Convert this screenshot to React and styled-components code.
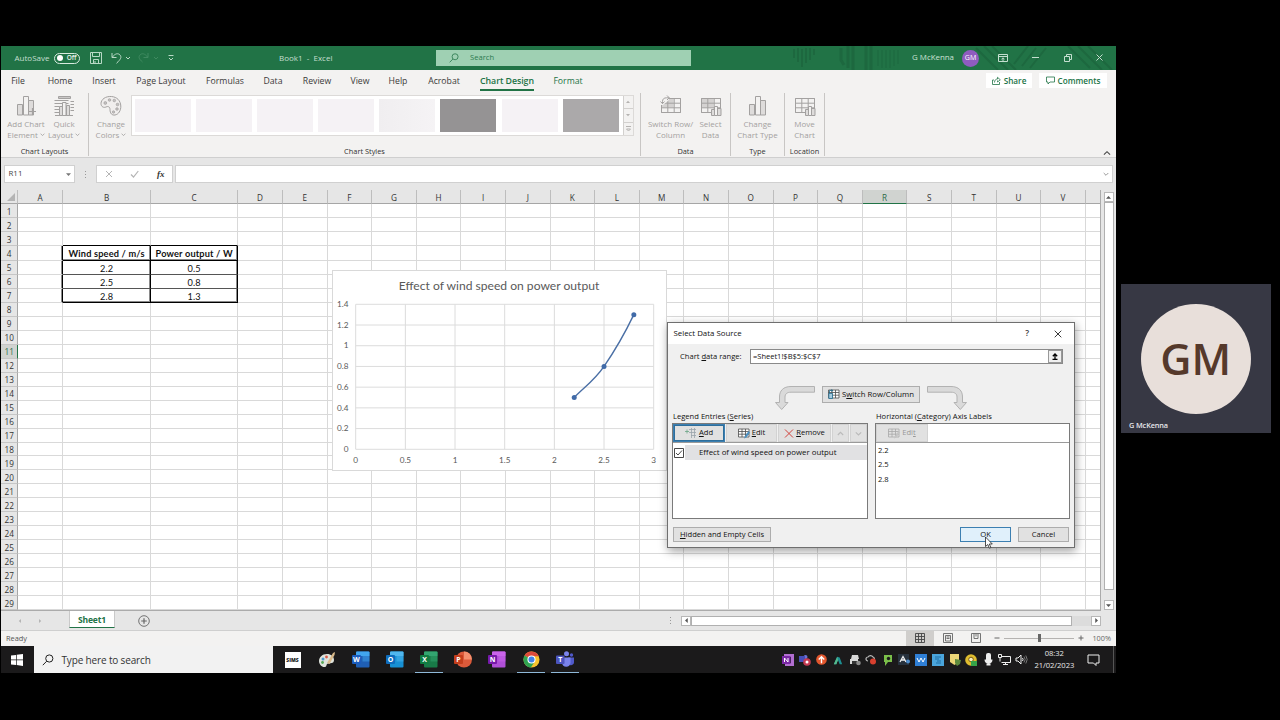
import React from "react";
import styled, { createGlobalStyle } from "styled-components";

const GlobalStyle = createGlobalStyle`
  * {
    box-sizing: border-box;
  }
  body {
    margin: 0;
    background: #000;
    overflow: hidden;
    font-family: "Open Sans", "Noto Sans", sans-serif;
  }
  svg {
    display: block;
    flex: none;
  }
`;

const Page = styled.div`
  display: flex;
  width: 1280px;
  height: 720px;
  background: #000;
`;

const Desktop = styled.div`
  position: relative;
  display: flex;
  flex-direction: column;
  width: 1115px;
  height: 627px;
  margin: 46px 0 0 1px;
  background: #e6e6e6;
  white-space: nowrap;
`;

const Text = styled.span`
  display: block;
  font-size: ${(p) => p.$size || 8}px;
  font-weight: ${(p) => p.$weight || 400};
  color: ${(p) => p.$color || "#333"};
  letter-spacing: ${(p) => p.$ls || 0}px;
  line-height: 1.2;
`;

/* ---------- title bar ---------- */

const TitleBar = styled.div`
  position: relative;
  display: flex;
  align-items: center;
  height: 24px;
  flex: none;
  background: #217346;
`;

const TitlePattern = styled.svg`
  position: absolute;
  top: 0;
  right: 0;
`;

const TitleLeft = styled.div`
  display: flex;
  align-items: center;
  width: 278px;
  padding-left: 13.5px;
`;

const Toggle = styled.div`
  display: flex;
  align-items: center;
  width: 26px;
  height: 11px;
  margin: 0 9.5px 0 5px;
  padding: 0 3px 0 2px;
  border: 1px solid #d8eadf;
  border-radius: 6px;
  justify-content: space-between;
`;

const Knob = styled.div`
  width: 6px;
  height: 6px;
  border-radius: 50%;
  background: #fff;
`;

const BookName = styled.div`
  width: 157px;
`;

const SearchBox = styled.div`
  display: flex;
  align-items: center;
  gap: 11px;
  width: 255px;
  height: 16px;
  padding-left: 13px;
  background: #9fd0b3;
`;

const TitleRight = styled.div`
  position: relative;
  display: flex;
  flex: 1;
  align-items: center;
  padding-left: 221px;
`;

const Avatar = styled.div`
  display: flex;
  align-items: center;
  justify-content: center;
  width: 17px;
  height: 17px;
  margin: 0 19px 0 8px;
  border-radius: 50%;
  background: #8f5cbf;
`;

/* ---------- ribbon ---------- */

const TabRow = styled.div`
  display: flex;
  flex: none;
  height: 22px;
  padding-left: 2px;
  background: #f3f2f1;
`;

const Tab = styled.div`
  display: flex;
  align-items: center;
  justify-content: center;
  width: ${(p) => p.$w}px;
  height: 22px;
`;

const ActiveLabel = styled.div`
  display: flex;
  align-items: center;
  height: 17px;
  margin-top: 2px;
  border-bottom: 2px solid #217346;
`;

const TabActions = styled.div`
  display: flex;
  gap: 7px;
  margin-left: auto;
  padding: 3px 9px 0 0;
`;

const ActionButton = styled.div`
  display: flex;
  align-items: center;
  justify-content: center;
  gap: 3px;
  width: ${(p) => p.$w}px;
  height: 15px;
  background: #fff;
`;

const Ribbon = styled.div`
  display: flex;
  flex: none;
  height: 66px;
  background: #f3f2f1;
  border-bottom: 1px solid #cfcfcf;
`;

const Group = styled.div`
  display: flex;
  flex-direction: column;
  justify-content: space-between;
  align-items: center;
  width: ${(p) => p.$w}px;
  height: 63px;
  margin-top: 1px;
  padding: 2px 0 0;
  border-right: 1px solid #c8c6c4;
`;

const GroupBody = styled.div`
  display: flex;
  align-items: flex-start;
  width: 100%;
  padding-left: ${(p) => p.$pad || 0}px;
`;

const BigButton = styled.div`
  display: flex;
  flex-direction: column;
  align-items: center;
  width: ${(p) => p.$w}px;
  svg {
    margin-bottom: 1px;
  }
`;

const ButtonLine = styled.div`
  display: flex;
  align-items: center;
  justify-content: center;
  gap: 2px;
  height: 11px;
`;

const Gallery = styled.div`
  display: flex;
  height: 41px;
  margin-left: 1.5px;
  background: #fff;
  border: 1px solid #dcdad8;
`;

const Swatches = styled.div`
  display: flex;
  gap: 5.2px;
  width: 491px;
  padding: 3px 0 0 3px;
`;

const Swatch = styled.div`
  width: 56px;
  height: 33px;
  background: ${(p) => p.$bg};
`;

const GalleryScroll = styled.div`
  display: flex;
  flex-direction: column;
  width: 10px;
  border-left: 1px solid #d2d0ce;
`;

const ScrollStep = styled.div`
  display: flex;
  flex: 1;
  align-items: center;
  justify-content: center;
  background: #f3f2f1;
  & + & {
    border-top: 1px solid #d2d0ce;
  }
`;

const Collapse = styled.div`
  display: flex;
  flex: 1;
  align-items: flex-end;
  justify-content: flex-end;
  padding: 0 5px 0 0;
`;

/* ---------- formula bar ---------- */

const FormulaBar = styled.div`
  display: flex;
  flex: none;
  height: 32px;
  padding-top: 7px;
  padding-left: 3px;
  background: #e6e6e6;
`;

const BarBox = styled.div`
  display: flex;
  align-items: center;
  justify-content: ${(p) => p.$justify || "space-between"};
  width: ${(p) => p.$w}px;
  height: 18px;
  margin-right: ${(p) => p.$mr || 0}px;
  padding: 0 ${(p) => p.$pad || 3.5}px;
  background: #fff;
  border: 1px solid #d0d0d0;
`;

const Dots = styled.div`
  display: flex;
  flex-direction: column;
  align-items: center;
  justify-content: center;
  gap: 2px;
  width: 21px;
  height: 18px;
  i {
    width: 1px;
    height: 1px;
    background: #999;
  }
`;

/* ---------- sheet ---------- */

const SheetArea = styled.div`
  display: flex;
  flex: none;
  height: 420.5px;
`;

const Sheet = styled.div`
  width: 1100px;
  overflow: hidden;
  border-right: 1px solid #ababab;
  border-bottom: 1px solid #ababab;
`;

const HeaderRow = styled.div`
  display: flex;
  height: 14px;
  background: #e6e6e6;
`;

const Corner = styled.div`
  display: flex;
  flex: none;
  align-items: flex-end;
  justify-content: flex-end;
  width: 17.3px;
  padding: 0 2px 2px 0;
  border-right: 1px solid #bdbdbd;
  border-bottom: 1px solid #a6a6a6;
`;

const ColHead = styled.div`
  display: flex;
  flex: none;
  align-items: center;
  justify-content: center;
  width: ${(p) => p.$w}px;
  padding-top: 2px;
  border-right: 1px solid #bdbdbd;
  border-bottom: 1px solid ${(p) => (p.$on ? "#217346" : "#a6a6a6")};
  background: ${(p) => (p.$on ? "#d0d3d0" : "#e6e6e6")};
`;

const SheetRow = styled.div`
  display: flex;
  height: ${(p) => p.$h}px;
  background: #fff;
`;

const RowHead = styled.div`
  display: flex;
  flex: none;
  align-items: center;
  justify-content: center;
  width: 17.3px;
  padding-top: 2px;
  border-bottom: 1px solid #c6c6c6;
  border-right: 1px solid ${(p) => (p.$on ? "#217346" : "#a6a6a6")};
  background: ${(p) => (p.$on ? "#d0d3d0" : "#e6e6e6")};
`;

const Cell = styled.div`
  display: flex;
  flex: none;
  align-items: center;
  justify-content: center;
  width: ${(p) => p.$w}px;
  padding-top: 2px;
  border-right: 1px solid ${(p) => (p.$right ? "#000" : "#d9d9d9")};
  border-bottom: 1px solid ${(p) => p.$bottom || "#d9d9d9"};
  box-shadow: ${(p) => (p.$right ? "inset -1px 0 0 #8a8a8a" : "none")}${(p) =>
    p.$right && p.$bottom === "#000" ? ", inset 0 -1px 0 #8a8a8a" : ""};
  font-family: Lato, "Open Sans", sans-serif;
  font-size: 9.2px;
  font-weight: ${(p) => (p.$bold ? 700 : 400)};
  letter-spacing: ${(p) => (p.$bold ? 0.18 : 0.1)}px;
  color: #111;
`;

const VScroll = styled.div`
  display: flex;
  flex-direction: column;
  width: 10px;
  margin: 2px 0 0 2.5px;
`;

const ScrollButton = styled.div`
  display: flex;
  flex: none;
  align-items: center;
  justify-content: center;
  width: 10px;
  height: 10px;
  background: #fff;
  border: 1px solid #b8b8b8;
`;

const VThumb = styled.div`
  width: 10px;
  height: 388px;
  margin-bottom: 10px;
  background: #fff;
  border: 1px solid #b0b0b0;
`;

const SheetTabs = styled.div`
  display: flex;
  flex: none;
  height: 20px;
  align-items: flex-start;
  background: #e6e6e6;
  border-bottom: 1px solid #cfcfcf;
`;

const NavArrows = styled.div`
  display: flex;
  gap: 16px;
  width: 68px;
  padding: 8px 0 0 17px;
`;

const SheetTab = styled.div`
  display: flex;
  align-items: center;
  justify-content: center;
  width: 46px;
  height: 17.5px;
  margin-right: 23px;
  padding-top: 2px;
  background: #fff;
  border: 1px solid #c9c9c9;
  border-top: 0;
  border-bottom: 1px solid #217346;
`;

const HScroll = styled.div`
  display: flex;
  width: 420px;
  margin: 5px 15px 0 auto;
  background: #dcdcdc;
`;

const HDots = styled(Dots)`
  height: 10px;
  width: 20px;
  margin-left: -21px;
  margin-right: 1px;
  background: #e6e6e6;
`;

const HThumb = styled.div`
  width: 381px;
  height: 10px;
  margin-right: auto;
  background: #fff;
  border: 1px solid #b0b0b0;
`;

const StatusBar = styled.div`
  display: flex;
  flex: none;
  align-items: center;
  height: 15.5px;
  padding: 0 5px 0 5px;
  background: #f3f2f1;
`;

const Views = styled.div`
  display: flex;
  margin-left: auto;
`;

const ViewButton = styled.div`
  display: flex;
  align-items: center;
  justify-content: center;
  width: 28px;
  height: 15px;
  background: ${(p) => (p.$on ? "#d0cecc" : "transparent")};
`;

const ZoomTrack = styled.div`
  display: flex;
  align-items: center;
  justify-content: center;
  width: 70px;
  height: 12px;
  margin: 0 4px;
  background: linear-gradient(#b5b3b1, #b5b3b1) center / 100% 1px no-repeat;
  i {
    width: 3px;
    height: 8px;
    background: #666;
  }
`;

/* ---------- taskbar ---------- */

const Taskbar = styled.div`
  display: flex;
  align-items: stretch;
  flex: 1;
  background: #1b1a1b;
`;

const Start = styled.div`
  display: flex;
  align-items: center;
  justify-content: center;
  width: 33px;
`;

const TaskSearch = styled.div`
  display: flex;
  align-items: center;
  gap: 7.5px;
  width: 239px;
  padding-left: 8px;
  background: #f2f2f2;
`;

const Apps = styled.div`
  display: flex;
  width: 506.5px;
  padding-left: 2.5px;
`;

const AppSlot = styled.div`
  display: flex;
  align-items: center;
  justify-content: center;
  width: 34.1px;
  background: ${(p) =>
    p.$running
      ? "linear-gradient(#8fb8d8, #8fb8d8) center bottom / 28px 1.5px no-repeat"
      : "none"};
`;

const Sims = styled.div`
  display: flex;
  align-items: center;
  justify-content: center;
  width: 16px;
  height: 16px;
  background: #fff;
`;

const Tray = styled.div`
  display: flex;
`;

const TraySlot = styled.div`
  display: flex;
  align-items: center;
  justify-content: center;
  width: 16.7px;
`;

const Clock = styled.div`
  display: flex;
  flex-direction: column;
  align-items: center;
  justify-content: center;
  gap: 3px;
  width: 49px;
`;

const Notify = styled.div`
  display: flex;
  flex: 1;
  align-items: center;
  padding-left: 8px;
  margin-right: 2px;
  border-right: 1px solid #555;
`;

/* ---------- chart object ---------- */

const ChartFrame = styled.div`
  position: absolute;
  left: 331px;
  top: 224px;
  width: 335px;
  height: 201px;
  background: #fff;
  border: 1px solid #d9d9d9;
  font-family: Lato, "Open Sans", sans-serif;
`;

/* ---------- dialog ---------- */

const Dialog = styled.div`
  position: absolute;
  left: 666px;
  top: 276px;
  display: flex;
  flex-direction: column;
  width: 408px;
  height: 226px;
  border: 1px solid #6f6f6f;
  background: #f0f0f0;
  box-shadow: 1px 3px 9px rgba(0, 0, 0, 0.38);
`;

const DialogTitle = styled.div`
  display: flex;
  flex: none;
  align-items: center;
  height: 21px;
  padding: 0 12px 0 5.5px;
  background: #fff;
`;

const RangeRow = styled.div`
  display: flex;
  align-items: center;
  flex: none;
  height: 15px;
  margin-top: 5px;
  padding-left: 12px;
`;

const RangeLabel = styled.div`
  width: 70px;
`;

const RangeInput = styled.div`
  display: flex;
  align-items: center;
  justify-content: space-between;
  width: 313px;
  height: 15px;
  padding-left: 2px;
  background: #fff;
  border: 1px solid #8a8a8a;
`;

const Picker = styled.div`
  display: flex;
  align-items: center;
  justify-content: center;
  width: 14px;
  height: 13px;
  border: 1px solid #999;
  background: #f0f0f0;
`;

const SwitchRow = styled.div`
  display: flex;
  align-items: flex-start;
  gap: 7px;
  flex: none;
  height: 25px;
  margin-top: 22px;
  padding-left: 107px;
`;

const Button = styled.div`
  display: flex;
  align-items: center;
  justify-content: center;
  gap: 2px;
  width: ${(p) => p.$w}px;
  height: ${(p) => p.$h || 15}px;
  background: ${(p) => (p.$hot ? "#e0f0fb" : "#e1e1e1")};
  border: 1px solid
    ${(p) => (p.$hot || p.$focus ? "#3c7fb1" : p.$flat ? "#d2d2d2" : "#adadad")};
  box-shadow: ${(p) => (p.$focus ? "inset 0 0 0 1px #2d6e9c" : "none")};
`;

const Panels = styled.div`
  display: flex;
  flex: none;
  gap: 7px;
  padding-left: 4px;
`;

const Panel = styled.div`
  width: ${(p) => p.$w}px;
`;

const PanelLabel = styled.div`
  display: flex;
  align-items: center;
  height: 12px;
  padding-left: 1px;
`;

const ListBox = styled.div`
  height: 96px;
  background: #fff;
  border: 1px solid #7a7a7a;
`;

const ListTools = styled.div`
  display: flex;
  gap: ${(p) => p.$gap || 0}px;
  height: 19px;
  border-bottom: 1px solid #9a9a9a;
  background: ${(p) => p.$bg || "#fff"};
`;

const SeriesRow = styled.div`
  display: flex;
  align-items: center;
  gap: 15px;
  height: 15px;
  margin-top: 2px;
  padding-left: 1px;
  background: linear-gradient(90deg, #fff 12px, #e1e1e3 12px);
`;

const AxisItem = styled.div`
  display: flex;
  align-items: center;
  height: 14.6px;
  padding-left: 2px;
`;

const DialogFooter = styled.div`
  display: flex;
  gap: 7px;
  margin-top: 8px;
  padding: 0 5px 0 5px;
`;

const Push = styled.div`
  flex: 1;
`;

const Cursor = styled.svg`
  position: absolute;
  left: 983px;
  top: 490px;
`;

/* ---------- call participant ---------- */

const Participant = styled.div`
  display: flex;
  flex-direction: column;
  align-items: center;
  width: 149.5px;
  height: 149px;
  margin: 284px 0 0 5px;
  padding-top: 19.5px;
  background: #373844;
`;

const Initials = styled.div`
  display: flex;
  align-items: center;
  justify-content: center;
  width: 110px;
  height: 110px;
  border-radius: 50%;
  background: #e8dfda;
  color: #55392b;
  font-size: 43px;
  font-weight: 600;
  line-height: 1;
`;

const ParticipantName = styled.div`
  align-self: flex-start;
  padding: 7px 0 0 8px;
`;

/* ---------- small drawings ---------- */

const Chevron = ({ color = "#999", w = 6, up, sw = 1 }) => (
  <svg width={w} height={w} viewBox="0 0 6 6" fill="none" stroke={color} strokeWidth={sw}>
    <path d={up ? "M.7 4.3 3 2l2.3 2.3" : "M.7 2 3 4.3 5.3 2"} />
  </svg>
);

const Triangle = ({ dir = "down", color = "#555", w = 5 }) => {
  const turn = { down: 0, left: 90, up: 180, right: 270 }[dir];
  return (
    <svg width={w} height={w} viewBox="0 0 6 6">
      <path d="M0 1.5h6L3 4.8z" fill={color} transform={`rotate(${turn} 3 3)`} />
    </svg>
  );
};

const Magnifier = ({ w, color, sw = 1 }) => (
  <svg width={w} height={w} viewBox="0 0 12 12" fill="none" stroke={color} strokeWidth={sw}>
    <circle cx="7.3" cy="4.5" r="3.6" />
    <path d="M4.7 7.2.8 11.2" />
  </svg>
);

const BarsIcon = ({ children }) => (
  <svg width="22" height="22" viewBox="0 0 22 22" fill="#dedcdb" stroke="#a3a1a0">
    <path d="M2.5 9.500h5v10.500h-5z" />
    <path d="M8.500 1.500h5v18.500h-5z" fill="#f3f2f1" />
    <path d="M13.500 5.500h5v14.500h-5z" />
    {children}
  </svg>
);

const QuickLayoutIcon = () => (
  <svg width="22" height="22" viewBox="0 0 22 22" fill="none" stroke="#a3a1a0">
    <path d="M5.500 1.500h12v2h-12z" fill="#c9c7c6" />
    <path d="M1.500 5.500h14M1.500 8.500h14M1.500 11.500h5M1.500 14.500h5M1.500 17.500h5M2 20.500h18M17.500 6.500h3.500M17.500 9.500h3.500M17.500 12.500h3.500M17.500 15.500h3.500" />
    <path d="M6.500 11.500h3v9h-3zM13.500 10.500h3v10h-3z" fill="#dedcdb" />
    <path d="M9.500 7.500h3.500v13H9.500z" fill="#f3f2f1" />
  </svg>
);

const PaletteIcon = () => (
  <svg width="22" height="22" viewBox="0 0 22 22" fill="#f0eeed" stroke="#a3a1a0">
    <path d="M11.500 1.500C5.500 1 1 4.500 1 8.500c0 3.500 3 4.500 5 3.500 2.500-1.200 4 .2 4 2.500 0 4 2 6 5 5.500 3.500-.5 6-4.500 5.800-9C20.500 5.500 17 2 11.500 1.500z" />
    <g fill="#c3c1c0" strokeWidth=".7">
      <circle cx="5.300" cy="8" r="1.400" />
      <circle cx="9.500" cy="5" r="1.300" />
      <circle cx="14.300" cy="5.500" r="1.300" />
      <circle cx="17.500" cy="9.500" r="1.300" />
      <circle cx="17" cy="14" r="1.300" />
      <circle cx="13.500" cy="17" r="1.200" />
    </g>
  </svg>
);

const GridIcon = ({ chart, swap, plain }) => (
  <svg width="22" height="22" viewBox="0 0 22 22" fill="none" stroke="#a3a1a0">
    <path d="M1.500 3.500h19v14h-19z" fill="#f3f2f1" />
    <path d={plain ? "M0 0" : "M1.500 3.500h12v9h-12z"} fill="#d4d2d1" stroke="none" />
    <path d="M1.500 8.200h19M1.500 12.800h19M7.800 3.500v14M14.200 3.500v14M1.500 3.500h19v14h-19z" />
    {swap && (
      <>
        <path d="M0 0h9v5L3 10H0z" fill="#f3f2f1" stroke="none" />
        <path d="M2.500 8.500V6.500c0-2.500 1.500-3.700 4-3.700h2.500M7 .5l2.300 2.300L7 5M.5 6.500l2 2.200 2-2.200" />
      </>
    )}
    {chart && (
      <g fill="#dedcdb">
        <path d="M11.500 14.500h3v6h-3zM17.500 13.500h3.500v7h-3.500z" />
        <path d="M14.500 11.500h3v9h-3z" fill="#f3f2f1" />
      </g>
    )}
  </svg>
);

const TableGlyph = ({ pen, plus, dim, swap }) => {
  const line = dim ? "#a8a8a8" : "#4d4d4d";
  return (
    <svg width="12" height="11" viewBox="0 0 12 11" fill="none" stroke={line} strokeWidth=".8">
      {plus ? (
        <>
          <path d="M4 1.500h7M4 4.500h7M6 7.500h5M6.500 0v10M9.500 0v10" stroke="#9aa5ac" />
          <path d="M0 3.500h4M2 1.500v4" stroke="#6ba585" />
        </>
      ) : (
        <path d="M.5 1h10.500v8H.5zM.5 3.500h10.500M.5 6.200h10.500M4 1v8M7.500 1v8" fill={dim ? "none" : "#fff"} />
      )}
      {pen && <path d="M10.500 3 7 8l-1 2.500 2.300-1L12 4.500z" fill={dim ? "#c4c4c4" : "#4a90c2"} stroke="none" />}
      {swap && (
        <>
          <path d="M.8 4.500h3.700v5H.8z" fill="#a5cbe0" stroke="#226b8c" />
          <path d="M1.500 4V1.500h3M3.200 0l1.600 1.500L3.200 3" stroke="#226b8c" />
        </>
      )}
    </svg>
  );
};

const Bend = ({ flip }) => (
  <svg width="40" height="24" viewBox="0 0 40 24">
    <path
      d="M39.500.5H16C8 .5 4.500 5 4.500 11v5.500h-4L6.700 23.500l6.300-7H10V11c0-3 2-4.800 6-4.800h23.500z"
      fill="#dadada"
      stroke="#b2b2b2"
      transform={flip ? "translate(40 0) scale(-1 1)" : undefined}
    />
  </svg>
);

const OfficeIcon = ({ letter, dark, main, light, round }) => (
  <svg width="18" height="17" viewBox="0 0 18 17">
    {round ? (
      <>
        <circle cx="10" cy="8.500" r="8" fill={main} />
        <path d="M10 .5a8 8 0 0 1 8 8h-8z" fill={light} />
      </>
    ) : (
      <>
        <rect x="4" y=".5" width="13.500" height="16" rx="1" fill={main} />
        <path d="M4 1.500a1 1 0 0 1 1-1h11.500a1 1 0 0 1 1 1V5H4z" fill={light} />
        <path d="M10.500 5h7v5.500h-7z" fill={light} opacity=".5" />
      </>
    )}
    <rect x="0" y="4" width="9" height="9" rx="1" fill={dark} />
    <text x="4.500" y="11" fontSize="7" fontWeight="700" fill="#fff" textAnchor="middle">
      {letter}
    </text>
  </svg>
);

const TeamsIcon = () => (
  <svg width="18" height="17" viewBox="0 0 18 17">
    <circle cx="10.500" cy="2.800" r="2.500" fill="#7b83eb" />
    <circle cx="15.500" cy="4" r="1.700" fill="#5059c9" />
    <path d="M12 6.500h6v4.500a3 3 0 0 1-4 3z" fill="#5059c9" />
    <path d="M6 6.500h8.500v5.500a4.300 4.300 0 0 1-8.500 0z" fill="#7b83eb" />
    <rect x="0" y="4.500" width="8.500" height="8.500" rx="1" fill="#4b53bc" />
    <text x="4.300" y="11.300" fontSize="7" fontWeight="700" fill="#fff" textAnchor="middle">
      T
    </text>
  </svg>
);

const ChromeIcon = () => (
  <svg width="17" height="17" viewBox="0 0 18 18">
    <circle cx="9" cy="9" r="8.500" fill="#f7c32e" />
    <path d="M9 9 1.600 4.800A8.500 8.500 0 0 1 16.700 5.500L9 5.500z" fill="#dd4a3c" />
    <path d="M1.600 4.800A8.500 8.500 0 0 0 8.300 17.500L12 12 9 9z" fill="#2fa351" />
    <circle cx="9" cy="9" r="4.300" fill="#fff" />
    <circle cx="9" cy="9" r="3.200" fill="#4282e8" />
  </svg>
);

const PaintIcon = () => (
  <svg width="18" height="17" viewBox="0 0 18 17">
    <path d="M9 3C4 3 1 6.500 1 10s3 6.500 6 6c2-.4 1-2.500 2.500-3.200C12 12 16 13 16 9c0-3.500-3-6-7-6z" fill="#dfe3dc" />
    <circle cx="5" cy="8" r="1.500" fill="#4f9ad0" />
    <circle cx="8.500" cy="6" r="1.400" fill="#d75a48" />
    <circle cx="4.500" cy="11.500" r="1.400" fill="#58a858" />
    <path d="m9 12 6-10 2-1-.5 3-5 9z" fill="#d9b98a" />
  </svg>
);

const MicIcon = () => (
  <svg width="9" height="13" viewBox="0 0 9 13" fill="#eee">
    <rect x="2" y="0" width="5" height="8.500" rx="2" />
    <path d="M.5 6.500a4 4 0 0 0 8 0M2.500 12.500h4v-2h-4z" />
  </svg>
);

const trayIcons = [
  <svg width="12" height="12" viewBox="0 0 12 12">
    <path d="M2 0h10v12H3V9h6V3H2z" fill="#b26fd0" />
    <path d="M0 2h8.500v8H0z" fill="#7a28a5" />
    <path d="M2.500 8V4l3.500 4V4" stroke="#fff" fill="none" />
  </svg>,
  <svg width="12" height="12" viewBox="0 0 12 12">
    <circle cx="6.500" cy="3" r="2" fill="#6b73d8" />
    <path d="M0 2h6v6H0z" fill="#464eb8" />
    <circle cx="8" cy="8" r="3.800" fill="#c53a52" />
    <circle cx="8" cy="8" r="1.500" fill="#fff" />
  </svg>,
  <svg width="11" height="11" viewBox="0 0 12 12">
    <circle cx="6" cy="6" r="5.800" fill="#e2562d" />
    <path d="M6 10V3M3 6l3-3 3 3" stroke="#fff" strokeWidth="1.500" fill="none" />
  </svg>,
  <svg width="10" height="10" viewBox="0 0 12 12">
    <path d="m1 11 4-9 3 1 3 8H8L6 6l-2 5z" fill="#1d8f93" />
    <path d="m1 11 4-9 1 4-2 5z" fill="#57b98b" />
  </svg>,
  <svg width="12" height="12" viewBox="0 0 12 12">
    <path d="M3 1h6l1 4H2zM1 5h8v5H1z" fill="#d8d8d8" />
    <path d="M3 7h5v3H3z" fill="#333" />
    <circle cx="9.500" cy="9" r="2.300" fill="#8b8b8b" />
  </svg>,
  <svg width="12" height="10" viewBox="0 0 12 10">
    <path d="M3 6a2 2 0 0 1 0-4 3 3 0 0 1 5 0 2 2 0 0 1 1 3" stroke="#bbb" fill="none" strokeWidth="1.200" />
    <circle cx="8" cy="6.500" r="3" fill="#d8402f" />
  </svg>,
  <svg width="10" height="12" viewBox="0 0 10 12">
    <path d="M1 1h8v7H5l-3 4V8H1z" fill="#7bbf4a" />
    <circle cx="5.500" cy="4.500" r="1.700" fill="#1b1a1b" />
  </svg>,
  <svg width="13" height="11" viewBox="0 0 13 11">
    <path d="M0 0h11v11H0z" fill="#27313d" />
    <path d="m2 8 3-5.500L8 8M3 6h4" stroke="#eee" fill="none" strokeWidth="1.300" />
    <circle cx="10" cy="7.500" r="2" fill="#4f8fd0" />
  </svg>,
  <svg width="12" height="12" viewBox="0 0 12 12">
    <path d="M0 0h12v12H0z" fill="#2f7fd6" />
    <path d="m2 4 2 4 2-4 2 4 2-4" stroke="#fff" fill="none" />
  </svg>,
  <svg width="12" height="12" viewBox="0 0 12 12">
    <path d="M0 0h12v12H0z" fill="#4aa5dc" />
    <path d="M3 3h6M3 5h4M5 7h4M4 9h5" stroke="#1f6fa5" fill="none" />
  </svg>,
  <svg width="12" height="12" viewBox="0 0 12 12">
    <path d="M1 0h9v8l-4.500 3L1 8z" fill="#ecd677" />
    <path d="m6 5 6 1-1 4-3 2-2-3z" fill="#5d8a3d" />
  </svg>,
  <svg width="12" height="12" viewBox="0 0 12 12">
    <circle cx="6" cy="6" r="5.800" fill="#e0bd2f" />
    <circle cx="6" cy="5.500" r="2.300" fill="#f8f0c0" stroke="#7a5a10" />
    <path d="M6 7h6v5H6z" fill="#36a349" />
  </svg>,
  <MicIcon />,
  <svg width="13" height="11" viewBox="0 0 13 11" fill="none" stroke="#eee">
    <path d="M3.500 2.500h9v6h-9M5 10.500h5M7.500 8.500v2" />
    <path d="M.5.500h3v3h-3zM2 3.500v4" fill="#1b1a1b" />
  </svg>,
  <svg width="13" height="11" viewBox="0 0 13 11" fill="none" stroke="#eee">
    <path d="M1 4h2l3-3v9L3 7H1zM7.500 4a2.500 2.500 0 0 1 0 3" />
    <path d="M9 2.500a5 5 0 0 1 0 6M10.800 1.500a7 7 0 0 1 0 8" stroke="#777" />
  </svg>,
];

/* ---------- data ---------- */

const TABS = [
  ["File", 30],
  ["Home", 54],
  ["Insert", 34],
  ["Page Layout", 80],
  ["Formulas", 48],
  ["Data", 48],
  ["Review", 40],
  ["View", 46],
  ["Help", 30],
  ["Acrobat", 62],
  ["Chart Design", 64],
  ["Format", 58],
];

const SWATCHES = [
  "#f5f2f5",
  "#f5f2f5",
  "#f5f2f5",
  "#f5f2f5",
  "linear-gradient(90deg, #f0eef0, #f5f3f5)",
  "#959394",
  "#f5f2f5",
  "#aba9aa",
];

const COLS = "ABCDEFGHIJKLMNOPQRSTUVW".split("");
const colWidth = (c) => ({ A: 44.8, B: 87.9, C: 87.3 }[c] || 44.62);

const CELLS = {
  B4: "Wind speed / m/s",
  C4: "Power output / W",
  B5: "2.2",
  C5: "0.5",
  B6: "2.5",
  C6: "0.8",
  B7: "2.8",
  C7: "1.3",
};

const bottomEdge = (col, row) => {
  if (col !== "B" && col !== "C") return undefined;
  if (row === 3 || row === 4 || row === 7) return "#000";
  if (row === 5 || row === 6) return "#555";
  return undefined;
};

const POINTS = [
  [2.2, 0.5],
  [2.5, 0.8],
  [2.8, 1.3],
];
const px = (v) => 22.7 + v * 99.33;
const py = (v) => 178.3 - v * 103.57;

const DISABLED = "#a3a1a0";

const RibbonButton = ({ icon, lines, w, menu }) => (
  <BigButton $w={w}>
    {icon}
    {lines.map((line, i) => (
      <ButtonLine key={line}>
        <Text $size={8} $color={DISABLED}>
          {line}
        </Text>
        {menu && i === 1 && <Chevron w={5} color={DISABLED} />}
      </ButtonLine>
    ))}
  </BigButton>
);

const GroupLabel = ({ children }) => (
  <Text $size={7.4} $color="#333">
    {children}
  </Text>
);

const Header = () => (
  <TitleBar>
    <TitlePattern width="330" height="24" viewBox="0 0 330 24" fill="none" stroke="#1d683f" strokeWidth="2">
      <path d="M8 3v9M12 2v14M16 3v18M20 2v15M24 2v12M28 3v6" />
      <path d="M55 2v12l3 5M62 0v22M67 0v24M80 0v24M85 0v24" strokeWidth="3" />
      <path d="M92 4v16M96 4v18M100 4v18M104 4v18M108 4v16M112 4v14" strokeWidth="1" />
      <path d="M190 2l22 22M198 0l24 24M206 0l24 24M228 18l14-18M236 20l14-18M244 22l16-20M282 0l22 22M292 0l24 24M302 0l24 24" />
    </TitlePattern>
    <TitleLeft>
      <Text $size={8} $color="#c5dfd0">
        AutoSave
      </Text>
      <Toggle>
        <Knob />
        <Text $size={6.5} $weight={600} $color="#e6f2ea">
          Off
        </Text>
      </Toggle>
      <svg width="12" height="12" viewBox="0 0 12 12" fill="none" stroke="#b9d9c6">
        <path d="M.5.5h11v11H.5zM2.500.5v4h7v-4M3.500 11.500v-4h5v4M5 9v2" />
      </svg>
      <svg width="20" height="12" viewBox="0 0 20 12" fill="none" stroke="#b9d9c6" style={{ marginLeft: 9 }}>
        <path d="M1 1v4.500h4.500M1.300 5.200C4 1.500 7 .8 9 3c1.800 2.200 1 4-3.500 8.300M15 5l2 2 2-2" />
      </svg>
      <svg width="20" height="12" viewBox="0 0 20 12" fill="none" stroke="#3f8a60" style={{ marginLeft: 7 }}>
        <path d="M10 1v4.500H5.500M9.700 5.200C7 1.500 4 .8 2 3c-1.800 2.200-1 4 2.500 7M16 5l2 2 2-2" />
      </svg>
      <svg width="6" height="6" viewBox="0 0 6 6" fill="none" stroke="#b9d9c6" style={{ marginLeft: 10 }}>
        <path d="M.5.5h5M1 3l2 2 2-2" />
      </svg>
    </TitleLeft>
    <BookName>
      <Text $size={8} $color="#c5dfd0">
        Book1 &nbsp;-&nbsp; Excel
      </Text>
    </BookName>
    <SearchBox>
      <Magnifier w={10} color="#2c7a4f" />
      <Text $size={7.6} $color="#2c7a4f">
        Search
      </Text>
    </SearchBox>
    <TitleRight>
      <Text $size={7.9} $color="#cbe2d5">
        G McKenna
      </Text>
      <Avatar>
        <Text $size={7} $color="#fff">
          GM
        </Text>
      </Avatar>
      <svg width="105" height="12" viewBox="0 0 105 12" fill="none" stroke="#c5dfd0">
        <path d="M.5 2.500h9v7h-9zM.5 4.500h9M5 9V6M3.500 7.200 5 5.800l1.500 1.400M34 5.500h7M66.500 4.500h5v5h-5zM68.500 4.500v-2h5v5h-2M98.500 2.500l6 6M104.500 2.500l-6 6" />
      </svg>
    </TitleRight>
  </TitleBar>
);

const Tabs = () => (
  <TabRow>
    {TABS.map(([name, w]) => (
      <Tab key={name} $w={w}>
        {name === "Chart Design" ? (
          <ActiveLabel>
            <Text $size={8.8} $weight={600} $color="#217346" $ls={-0.05}>
              {name}
            </Text>
          </ActiveLabel>
        ) : (
          <Text $size={8.7} $color={name === "Format" ? "#217346" : "#3b3a39"}>
            {name}
          </Text>
        )}
      </Tab>
    ))}
    <TabActions>
      <ActionButton $w={46}>
        <svg width="9" height="9" viewBox="0 0 9 9" fill="none" stroke="#217346" strokeWidth=".8">
          <path d="M2 4H.5v4.500h7V6M2.500 6.500C2.500 4 4 3 5.500 3V1.300L8.300 3.800 5.500 6V4.500" />
        </svg>
        <Text $size={8.2} $weight={600} $color="#217346">
          Share
        </Text>
      </ActionButton>
      <ActionButton $w={68}>
        <svg width="9" height="9" viewBox="0 0 9 9" fill="none" stroke="#217346" strokeWidth=".8">
          <path d="M.5 1h8v5H4L2 8V6H.5z" />
        </svg>
        <Text $size={8.2} $weight={600} $color="#217346">
          Comments
        </Text>
      </ActionButton>
    </TabActions>
  </TabRow>
);

const RibbonArea = () => (
  <Ribbon>
    <Group $w={88}>
      <GroupBody $pad={3}>
        <RibbonButton
          w={44}
          menu
          lines={["Add Chart", "Element"]}
          icon={
            <BarsIcon>
              <path d="M17.500 13v7M14 16.500h7" strokeWidth="1.200" />
            </BarsIcon>
          }
        />
        <RibbonButton w={32} menu lines={["Quick", "Layout"]} icon={<QuickLayoutIcon />} />
      </GroupBody>
      <GroupLabel>Chart Layouts</GroupLabel>
    </Group>
    <Group $w={552}>
      <GroupBody $pad={4}>
        <RibbonButton w={36} menu lines={["Change", "Colors"]} icon={<PaletteIcon />} />
        <Gallery>
          <Swatches>
            {SWATCHES.map((bg, i) => (
              <Swatch key={i} $bg={bg} />
            ))}
          </Swatches>
          <GalleryScroll>
            <ScrollStep>
              <Triangle dir="up" w={4} color="#b5b3b1" />
            </ScrollStep>
            <ScrollStep>
              <Triangle w={4} color="#b5b3b1" />
            </ScrollStep>
            <ScrollStep>
              <svg width="5" height="6" viewBox="0 0 5 6" fill="none" stroke="#b5b3b1">
                <path d="M0 .5h5M.5 3h4L2.500 5z" />
              </svg>
            </ScrollStep>
          </GalleryScroll>
        </Gallery>
      </GroupBody>
      <GroupLabel>Chart Styles</GroupLabel>
    </Group>
    <Group $w={90}>
      <GroupBody $pad={5}>
        <RibbonButton w={49} lines={["Switch Row/", "Column"]} icon={<GridIcon swap />} />
        <RibbonButton w={31} lines={["Select", "Data"]} icon={<GridIcon chart />} />
      </GroupBody>
      <GroupLabel>Data</GroupLabel>
    </Group>
    <Group $w={54}>
      <GroupBody>
        <RibbonButton w={53} lines={["Change", "Chart Type"]} icon={<BarsIcon />} />
      </GroupBody>
      <GroupLabel>Type</GroupLabel>
    </Group>
    <Group $w={40}>
      <GroupBody>
        <RibbonButton w={39} lines={["Move", "Chart"]} icon={<GridIcon chart plain />} />
      </GroupBody>
      <GroupLabel>Location</GroupLabel>
    </Group>
    <Collapse>
      <Chevron w={8} up color="#444" sw={0.8} />
    </Collapse>
  </Ribbon>
);

const FormulaArea = () => (
  <FormulaBar>
    <BarBox $w={71}>
      <Text $size={7.9} $color="#444">
        R11
      </Text>
      <Triangle w={5} color="#777" />
    </BarBox>
    <Dots>
      <i />
      <i />
      <i />
    </Dots>
    <BarBox $w={77} $mr={2} $pad={7.5}>
      <svg width="8" height="8" viewBox="0 0 8 8" stroke="#b5b5b5">
        <path d="m1 1 6 6M7 1 1 7" />
      </svg>
      <svg width="9" height="8" viewBox="0 0 9 8" fill="none" stroke="#b5b5b5" strokeWidth="1.200">
        <path d="m1 4.500 2.500 2.500L8.300 1" />
      </svg>
      <Text $size={9} $color="#333" style={{ fontFamily: "Liberation Serif", fontStyle: "italic", fontWeight: 700 }}>
        fx
      </Text>
    </BarBox>
    <BarBox $w={938} $justify="flex-end">
      <Chevron w={6} />
    </BarBox>
  </FormulaBar>
);

const Worksheet = () => (
  <SheetArea>
    <Sheet>
      <HeaderRow>
        <Corner>
          <svg width="8" height="8" viewBox="0 0 8 8">
            <path d="M8 0v8H0z" fill="#b4b4b4" />
          </svg>
        </Corner>
        {COLS.map((c) => (
          <ColHead key={c} $w={colWidth(c)} $on={c === "R"}>
            <Text $size={8.2} $color={c === "R" ? "#2f6b4a" : "#333"}>
              {c === "W" ? "" : c}
            </Text>
          </ColHead>
        ))}
      </HeaderRow>
      {Array.from({ length: 29 }, (_, i) => i + 1).map((row) => (
        <SheetRow key={row} $h={row === 4 ? 15 : 13.98}>
          <RowHead $on={row === 11}>
            <Text $size={8.2} $color={row === 11 ? "#2f6b4a" : "#333"}>
              {row}
            </Text>
          </RowHead>
          {COLS.map((c) => (
            <Cell
              key={c}
              $w={colWidth(c)}
              $bold={row === 4}
              $right={row > 3 && row < 8 && "ABC".includes(c)}
              $bottom={bottomEdge(c, row)}
            >
              {CELLS[c + row]}
            </Cell>
          ))}
        </SheetRow>
      ))}
    </Sheet>
    <VScroll>
      <ScrollButton>
        <Triangle dir="up" w={5} />
      </ScrollButton>
      <VThumb />
      <ScrollButton>
        <Triangle w={5} />
      </ScrollButton>
    </VScroll>
  </SheetArea>
);

const BottomBars = () => (
  <>
    <SheetTabs>
      <NavArrows>
        <Triangle dir="left" w={4} color="#b5b5b5" />
        <Triangle dir="right" w={4} color="#b5b5b5" />
      </NavArrows>
      <SheetTab>
        <Text $size={8.5} $weight={700} $color="#217346" $ls={-0.15}>
          Sheet1
        </Text>
      </SheetTab>
      <svg width="12" height="12" viewBox="0 0 12 12" fill="none" stroke="#666" strokeWidth=".9" style={{ marginTop: 4 }}>
        <circle cx="6" cy="6" r="5.300" />
        <path d="M3.200 6h5.600M6 3.200v5.600" strokeWidth="1.200" />
      </svg>
      <HScroll>
        <HDots>
          <i />
          <i />
          <i />
        </HDots>
        <ScrollButton>
          <Triangle dir="left" w={5} />
        </ScrollButton>
        <HThumb />
        <ScrollButton>
          <Triangle dir="right" w={5} />
        </ScrollButton>
      </HScroll>
    </SheetTabs>
    <StatusBar>
      <Text $size={7.4} $color="#555">
        Ready
      </Text>
      <Views>
        <ViewButton $on>
          <svg width="10" height="10" viewBox="0 0 10 10" fill="none" stroke="#444" strokeWidth=".9">
            <path d="M.5.500h9v9h-9zM.5 3.500h9M.5 6.500h9M3.500.500v9M6.500.500v9" />
          </svg>
        </ViewButton>
        <ViewButton>
          <svg width="10" height="10" viewBox="0 0 10 10" fill="none" stroke="#666" strokeWidth=".9">
            <path d="M.5.500h9v9h-9zM2.500 2.500h5v5.500h-5zM3.500 4h3M3.500 5.500h3" />
          </svg>
        </ViewButton>
        <ViewButton>
          <svg width="10" height="10" viewBox="0 0 10 10" fill="none" stroke="#666" strokeWidth=".9">
            <path d="M.5.500h9v9h-9zM3 .5v5h4v-5M5 .5v3" />
          </svg>
        </ViewButton>
      </Views>
      <svg width="6" height="6" viewBox="0 0 6 6" stroke="#666" style={{ marginLeft: 4 }}>
        <path d="M.5 3h5" />
      </svg>
      <ZoomTrack>
        <i />
      </ZoomTrack>
      <svg width="6" height="6" viewBox="0 0 6 6" stroke="#666" style={{ marginRight: 8 }}>
        <path d="M.5 3h5M3 .5v5" />
      </svg>
      <Text $size={7.3} $color="#666">
        100%
      </Text>
    </StatusBar>
  </>
);

const TaskbarArea = () => (
  <Taskbar>
    <Start>
      <svg width="12" height="12" viewBox="0 0 12 12" fill="#fff" style={{ marginLeft: -2 }}>
        <path d="M0 1.600 5 .9v4.700H0zM5.700.8 12 0v5.600H5.700zM0 6.300h5V11L0 10.400zM5.700 6.300H12V12l-6.300-.9z" />
      </svg>
    </Start>
    <TaskSearch>
      <Magnifier w={12} color="#222" />
      <Text $size={10} $color="#333" $ls={-0.15}>
        Type here to search
      </Text>
    </TaskSearch>
    <Apps>
      <AppSlot>
        <Sims>
          <Text $size={5} $weight={800} $color="#222">
            SIMS
          </Text>
        </Sims>
      </AppSlot>
      <AppSlot>
        <PaintIcon />
      </AppSlot>
      <AppSlot>
        <OfficeIcon letter="W" dark="#1b5cbe" main="#1f5fb5" light="#41a5ee" />
      </AppSlot>
      <AppSlot>
        <OfficeIcon letter="O" dark="#0f6cbd" main="#1790d4" light="#50b6ee" />
      </AppSlot>
      <AppSlot $running>
        <OfficeIcon letter="X" dark="#107c41" main="#187a47" light="#33a570" />
      </AppSlot>
      <AppSlot>
        <OfficeIcon letter="P" dark="#c43e1c" main="#dc5a3a" light="#f4906e" round />
      </AppSlot>
      <AppSlot>
        <OfficeIcon letter="N" dark="#7719aa" main="#b04fd8" light="#ca64ea" />
      </AppSlot>
      <AppSlot $running>
        <ChromeIcon />
      </AppSlot>
      <AppSlot $running>
        <TeamsIcon />
      </AppSlot>
    </Apps>
    <Tray>
      {trayIcons.map((icon, i) => (
        <TraySlot key={i}>{icon}</TraySlot>
      ))}
    </Tray>
    <Clock>
      <Text $size={7.6} $color="#e8e8e8" $ls={-0.05}>
        08:32
      </Text>
      <Text $size={7.6} $color="#e8e8e8" $ls={-0.05}>
        21/02/2023
      </Text>
    </Clock>
    <Notify>
      <svg width="13" height="12" viewBox="0 0 13 12" fill="none" stroke="#eee">
        <path d="M1 1h11v8H9v2.500L6.500 9H1z" />
      </svg>
    </Notify>
  </Taskbar>
);

const ChartObject = () => (
  <ChartFrame>
    <svg width="333" height="199" viewBox="0 0 333 199" fontSize="8.2" fill="#595959">
      <text x="166" y="19" fontSize="12.1" textAnchor="middle">
        Effect of wind speed on power output
      </text>
      <g stroke="#dcdcdc">
        {[0, 0.5, 1, 1.5, 2, 2.5, 3].map((v) => (
          <path key={v} d={`M${px(v)} ${py(1.4)}V${py(0)}`} />
        ))}
        {[0, 0.2, 0.4, 0.6, 0.8, 1, 1.2, 1.4].map((v) => (
          <path key={v} d={`M${px(0)} ${py(v)}H${px(3)}`} />
        ))}
      </g>
      {[0, 0.5, 1, 1.5, 2, 2.5, 3].map((v) => (
        <text key={v} x={px(v)} y="191.500" textAnchor="middle">
          {v}
        </text>
      ))}
      {[0, 0.2, 0.4, 0.6, 0.8, 1, 1.2, 1.4].map((v) => (
        <text key={v} x="15.500" y={py(v) + 2.7} textAnchor="end">
          {v}
        </text>
      ))}
      <path
        d={`M${px(2.2)} ${py(0.5)}C${px(2.3)} ${py(0.6)} ${px(2.4)} ${py(0.66)} ${px(2.5)} ${py(0.8)}S${px(
          2.7
        )} ${py(1.1)} ${px(2.8)} ${py(1.3)}`}
        fill="none"
        stroke="#4a6fa5"
        strokeWidth="1.400"
      />
      {POINTS.map(([x, y]) => (
        <circle key={x} cx={px(x)} cy={py(y)} r="2.500" fill="#416ba8" />
      ))}
    </svg>
  </ChartFrame>
);

const D = ({ children, color = "#111", size = 7.6 }) => (
  <Text $size={size} $color={color}>
    {children}
  </Text>
);

const SelectDataDialog = () => (
  <Dialog>
    <DialogTitle>
      <D size={7.85}>Select Data Source</D>
      <Push />
      <Text $size={8.5} $weight={600} style={{ marginRight: 25 }}>
        ?
      </Text>
      <svg width="8" height="8" viewBox="0 0 8 8" stroke="#222" strokeWidth=".9">
        <path d="m.7.7 6.600 6.600M7.300.7.7 7.300" />
      </svg>
    </DialogTitle>
    <RangeRow>
      <RangeLabel>
        <D>
          Chart <u>d</u>ata range:
        </D>
      </RangeLabel>
      <RangeInput>
        <D size={7.5}>=Sheet1!$B$5:$C$7</D>
        <Picker>
          <svg width="6" height="7" viewBox="0 0 6 7" stroke="#000" strokeWidth="1.300" fill="none">
            <path d="M3 6V1M.8 3.200 3 1l2.200 2.200M.5 6.300h5" />
          </svg>
        </Picker>
      </RangeInput>
    </RangeRow>
    <SwitchRow>
      <Bend />
      <Button $w={98} $h={17}>
        <TableGlyph swap />
        <D size={7.75}>
          S<u>w</u>itch Row/Column
        </D>
      </Button>
      <Bend flip />
    </SwitchRow>
    <Panels>
      <Panel $w={196}>
        <PanelLabel>
          <D>
            Legend Entries (<u>S</u>eries)
          </D>
        </PanelLabel>
        <ListBox>
          <ListTools $gap={1} $bg="#f0f0f0">
            <Button $w={52} $h={18} $focus>
              <TableGlyph plus />
              <D>
                <u>A</u>dd
              </D>
            </Button>
            <Button $w={51} $h={18} $flat>
              <TableGlyph pen />
              <D>
                <u>E</u>dit
              </D>
            </Button>
            <Button $w={53} $h={18} $flat>
              <svg width="10" height="9" viewBox="0 0 10 9" stroke="#d0453e" strokeWidth="1">
                <path d="m1 .5 8 8M9 .5l-8 8" />
              </svg>
              <D>
                <u>R</u>emove
              </D>
            </Button>
            <Button $w={17} $h={18} $flat>
              <Chevron w={7} up color="#bbb" />
            </Button>
            <Button $w={17} $h={18} $flat>
              <Chevron w={7} color="#bbb" />
            </Button>
          </ListTools>
          <SeriesRow>
            <svg width="10" height="10" viewBox="0 0 10 10" fill="#fff" stroke="#333" strokeWidth=".9">
              <path d="M.5.500h9v9h-9zM2 5l2 2 4-4.500" />
            </svg>
            <D size={7.85}>Effect of wind speed on power output</D>
          </SeriesRow>
        </ListBox>
      </Panel>
      <Panel $w={195}>
        <PanelLabel>
          <D>
            Horizontal (<u>C</u>ategory) Axis Labels
          </D>
        </PanelLabel>
        <ListBox>
          <ListTools>
            <Button $w={52} $h={18} $flat>
              <TableGlyph pen dim />
              <D color="#999">
                Edi<u>t</u>
              </D>
            </Button>
          </ListTools>
          {POINTS.map(([x]) => (
            <AxisItem key={x}>
              <D>{x}</D>
            </AxisItem>
          ))}
        </ListBox>
      </Panel>
    </Panels>
    <DialogFooter>
      <Button $w={98}>
        <D>
          <u>H</u>idden and Empty Cells
        </D>
      </Button>
      <Push />
      <Button $w={51} $hot>
        <D>OK</D>
      </Button>
      <Button $w={51}>
        <D>Cancel</D>
      </Button>
    </DialogFooter>
  </Dialog>
);

const App = () => (
  <Page>
    <GlobalStyle />
    <Desktop>
      <Header />
      <Tabs />
      <RibbonArea />
      <FormulaArea />
      <Worksheet />
      <BottomBars />
      <TaskbarArea />
      <ChartObject />
      <SelectDataDialog />
      <Cursor width="9" height="13" viewBox="0 0 9 13" fill="#fff" stroke="#222" strokeWidth=".8">
        <path d="M1.500 1v9.500l2.300-2 1.600 3.700 1.500-.7-1.600-3.500h3z" />
      </Cursor>
    </Desktop>
    <Participant>
      <Initials>GM</Initials>
      <ParticipantName>
        <Text $size={7.3} $weight={600} $color="#e6e6ea" $ls={-0.1}>
          G McKenna
        </Text>
      </ParticipantName>
    </Participant>
  </Page>
);

export default App;
